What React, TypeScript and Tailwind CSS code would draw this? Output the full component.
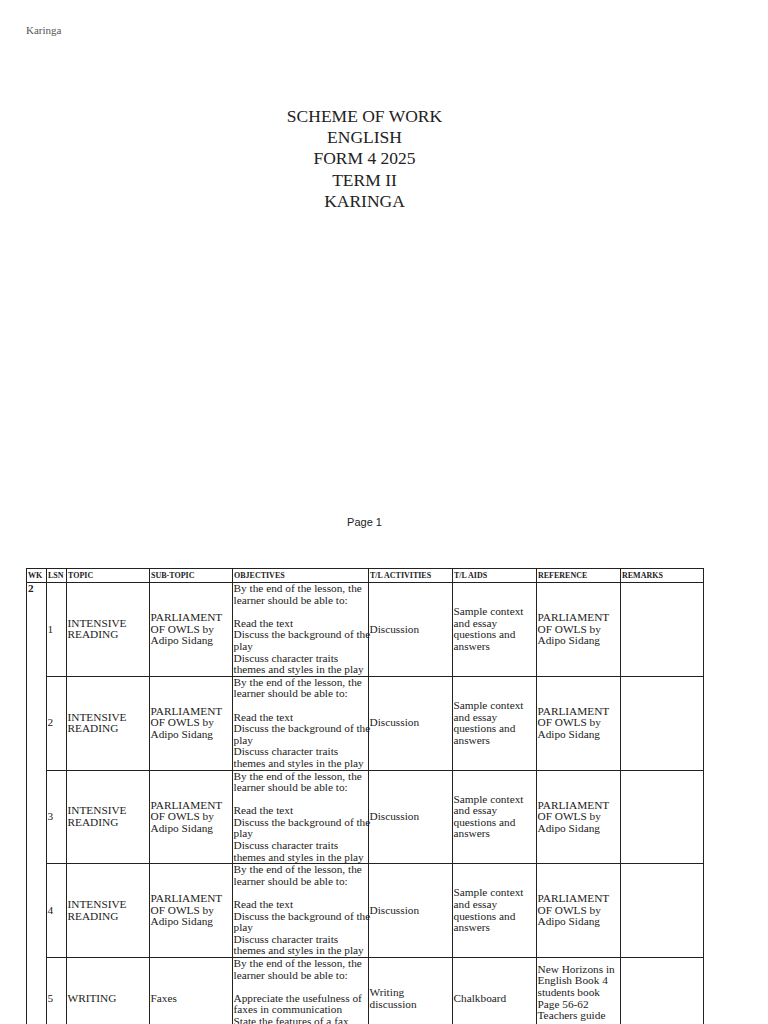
import React from 'react';

type Lesson = {
  lsn: string;
  topic: string[];
  subTopic: string[];
  objectives: string[];
  activities: string[];
  aids: string[];
  reference: string[];
};

const owlsObjectives = [
  'By the end of the lesson, the',
  'learner should be able to:',
  '',
  'Read the text',
  'Discuss the background of the',
  'play',
  'Discuss character traits',
  'themes and styles in the play',
];

const owlsLesson = (lsn: string): Lesson => ({
  lsn,
  topic: ['INTENSIVE', 'READING'],
  subTopic: ['PARLIAMENT', 'OF OWLS by', 'Adipo Sidang'],
  objectives: owlsObjectives,
  activities: ['Discussion'],
  aids: ['Sample context', 'and essay', 'questions and', 'answers'],
  reference: ['PARLIAMENT', 'OF OWLS by', 'Adipo Sidang'],
});

const lessons: Lesson[] = [
  owlsLesson('1'),
  owlsLesson('2'),
  owlsLesson('3'),
  owlsLesson('4'),
  {
    lsn: '5',
    topic: ['WRITING'],
    subTopic: ['Faxes'],
    objectives: [
      'By the end of the lesson, the',
      'learner should be able to:',
      '',
      'Appreciate the usefulness of',
      'faxes in communication',
      'State the features of a fax',
      'Write a fax',
    ],
    activities: ['Writing', 'discussion'],
    aids: ['Chalkboard'],
    reference: ['New Horizons in', 'English Book 4', 'students book', 'Page 56-62', 'Teachers guide', 'page 23-24'],
  },
];

const headers = ['WK', 'LSN', 'TOPIC', 'SUB-TOPIC', 'OBJECTIVES', 'T/L ACTIVITIES', 'T/L AIDS', 'REFERENCE', 'REMARKS'];
const widths = [20, 20, 83, 83, 136, 84, 84, 84, 83];

const Lines = ({ lines }: { lines: string[] }) => (
  <>
    {lines.map((l, i) => (
      <div key={i} className="whitespace-nowrap h-[11.6px]">
        {l || '\u00a0'}
      </div>
    ))}
  </>
);

const cell = 'border border-[#222] align-middle pl-[0.5px] pr-0 py-0';

const App = () => {
  return (
    <div className="w-[768px] min-h-[1024px] bg-white overflow-hidden" style={{ fontFamily: '"Liberation Serif", "Times New Roman", serif' }}>
      <div className="ml-[26px] w-[677px]">
        <div className="pt-[24px] text-[11px] leading-[12px] text-[#555]">Karinga</div>

        <div className="mt-[70px] text-center text-[17.5px] leading-[21.2px] text-[#222]">
          <div>SCHEME OF WORK</div>
          <div>ENGLISH</div>
          <div>FORM 4 2025</div>
          <div>TERM II</div>
          <div>KARINGA</div>
        </div>

        <div
          className="mt-[304px] text-center text-[11px] leading-[12px] text-[#222]"
          style={{ fontFamily: '"Liberation Sans", Arial, sans-serif' }}
        >
          Page 1
        </div>

        <table className="mt-[40px] table-fixed border-collapse w-[677px] text-[11.3px] leading-[11.6px] text-[#222]">
          <colgroup>
            {widths.map((w, i) => (
              <col key={i} style={{ width: w }} />
            ))}
          </colgroup>
          <thead>
            <tr className="h-[14px]">
              {headers.map((h) => (
                <th
                  key={h}
                  className="border border-[#222] text-left font-bold text-[8px] leading-[12px] pl-[1px] py-0 align-middle whitespace-nowrap overflow-hidden"
                >
                  {h}
                </th>
              ))}
            </tr>
          </thead>
          <tbody>
            {lessons.map((l, i) => (
              <tr key={l.lsn}>
                {i === 0 && (
                  <td rowSpan={lessons.length} className="border border-[#222] align-top pl-[1px] py-0 font-bold text-[11.3px]">
                    2
                  </td>
                )}
                <td className={cell}>{l.lsn}</td>
                <td className={cell}>
                  <Lines lines={l.topic} />
                </td>
                <td className={cell}>
                  <Lines lines={l.subTopic} />
                </td>
                <td className={cell}>
                  <Lines lines={l.objectives} />
                </td>
                <td className={cell}>
                  <Lines lines={l.activities} />
                </td>
                <td className={cell}>
                  <Lines lines={l.aids} />
                </td>
                <td className={cell}>
                  <Lines lines={l.reference} />
                </td>
                <td className={cell}></td>
              </tr>
            ))}
          </tbody>
        </table>
      </div>
    </div>
  );
};

export default App;
